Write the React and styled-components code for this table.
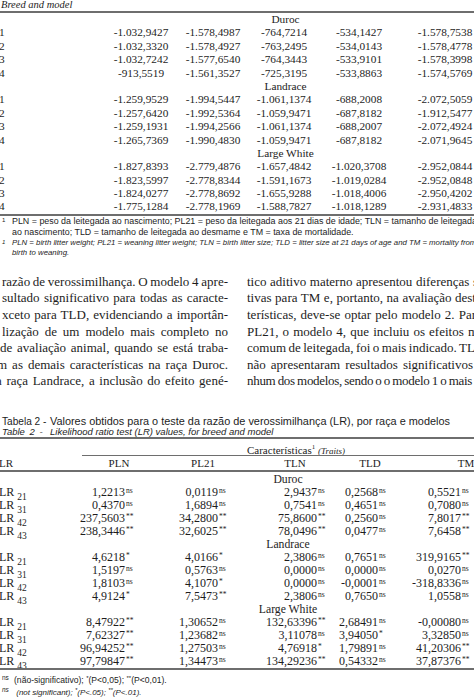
import React from "react";
import styled, { createGlobalStyle } from "styled-components";

const GlobalStyle = createGlobalStyle`
  html, body {
    margin: 0;
    padding: 0;
    background: #fff;
  }
  body {
    width: 474px;
    height: 698px;
    overflow: hidden;
    color: #1d1d1d;
    font-family: "Liberation Serif", "Times New Roman", serif;
  }
`;

const Page = styled.div`
  width: 474px;
  height: 698px;
  overflow: hidden;
  display: flex;
  flex-direction: column;
`;

const Rule = styled.div`
  flex: none;
  height: ${(p) => p.$h || 2}px;
  margin-left: ${(p) => p.$left || 0}px;
  background: #6e6e6e;
`;

/* ---------- table 1 (log likelihood) ---------- */

const BreedLabel = styled.div`
  font-style: italic;
  font-size: 10.5px;
  line-height: 11px;
  height: 12px;
  margin-top: -1px;
  padding-left: 1px;
`;

const Table1 = styled.div`
  display: grid;
  grid-template-columns: 105px 72px 72px 70px 80px 92px;
  grid-auto-rows: 13.4px;
  width: 491px;
  font-size: 11.3px;
  line-height: 13.4px;
`;

const T1Breed = styled.div`
  grid-column: 1 / -1;
  text-align: center;
  padding-left: 80px;
`;

const T1Label = styled.div`
  text-indent: -1px;
`;

const T1Cell = styled.div`
  text-align: center;
  white-space: nowrap;
`;

/* ---------- footnotes ---------- */

const Notes = styled.div`
  font-family: "Liberation Sans", Arial, sans-serif;
  white-space: nowrap;
`;

const Note = styled.div`
  display: flex;
`;

const Mark = styled.span`
  flex: none;
  width: 10px;
  padding-left: 2px;
  font-size: 6px;
  line-height: 8px;
  font-style: ${(p) => (p.$italic ? "italic" : "normal")};
`;

const NoteLines = styled.div`
  font-size: ${(p) => (p.$italic ? 7.8 : 8.9)}px;
  line-height: ${(p) => (p.$italic ? 10.5 : 11)}px;
  font-style: ${(p) => (p.$italic ? "italic" : "normal")};
`;

/* ---------- body text ---------- */

const Columns = styled.div`
  display: grid;
  grid-template-columns: 228px 240px;
  column-gap: 19px;
  margin-top: 15px;
  font-size: 13px;
  line-height: 16.6px;
`;

const Column = styled.div`
  display: flex;
  flex-direction: column;
`;

const TextLine = styled.div`
  width: ${(p) => p.$w || 228}px;
  margin-left: ${(p) => p.$left || 0}px;
  text-align: justify;
  text-align-last: justify;
  text-indent: ${(p) => p.$indent || 0}px;
  word-spacing: ${(p) => p.$ws || 0}px;
  letter-spacing: ${(p) => p.$ls || 0}px;
`;

/* ---------- table 2 (LR) ---------- */

const Caption = styled.div`
  display: grid;
  grid-template-columns: 48px auto;
  margin-top: 26px;
  padding-left: 2px;
  font-family: "Liberation Sans", Arial, sans-serif;
  white-space: nowrap;
`;

const CapText = styled.div`
  font-size: ${(p) => (p.$italic ? 9.5 : p.$label ? 10.1 : 10.9)}px;
  line-height: ${(p) => (p.$italic ? 10 : 11)}px;
  font-style: ${(p) => (p.$italic ? "italic" : "normal")};
  word-spacing: ${(p) => p.$ws || 0}px;
`;

const T2Head = styled.div`
  display: grid;
  grid-template-columns: 82px 74px 94px 90px 60px 132px;
  font-size: 11px;
`;

const Traits = styled.div`
  grid-column: 2 / -1;
  height: 16px;
  line-height: 17px;
  text-align: center;
  padding-right: 22px;
  white-space: nowrap;

  sup {
    font-size: 7px;
  }
  i {
    font-size: 9px;
  }
`;

const HeadCell = styled.div`
  height: 14px;
  line-height: 14px;
  text-align: ${(p) => (p.$left ? "left" : "center")};
  text-indent: ${(p) => (p.$left ? -1 : 0)}px;
`;

const Table2 = styled.div`
  display: grid;
  grid-template-columns: 82px 56px 93px 99px 61px 83px;
  grid-auto-rows: 13px;
  padding-top: 1px;
  font-size: 12px;
  line-height: 13px;
`;

const T2Breed = styled.div`
  grid-column: 2 / -1;
  text-align: center;
  padding-left: 20px;
  font-size: 11.7px;
`;

const LrLabel = styled.div`
  text-indent: -1px;
  white-space: nowrap;

  sub {
    font-size: 9.5px;
    vertical-align: -4px;
    margin-left: 3px;
  }
`;

const Val = styled.div`
  display: flex;
  justify-content: flex-end;
  align-items: flex-start;
  white-space: nowrap;
`;

const Sig = styled.span`
  flex: none;
  width: 12px;
  padding-left: 1px;
  font-size: 7.5px;
  line-height: 9px;
`;

const NsMark = styled.span`
  display: inline-block;
  width: 12px;
  padding-left: 2px;
  font-size: 6.5px;
  vertical-align: 3px;
`;

const Star = styled.span`
  font-size: 6px;
  vertical-align: 3px;
`;

const T2Notes = styled.div`
  margin-top: 3px;
  font-family: "Liberation Sans", Arial, sans-serif;
  white-space: nowrap;
`;

const T2Note = styled.div`
  font-size: ${(p) => (p.$italic ? 8 : 8.6)}px;
  line-height: 10px;
  font-style: ${(p) => (p.$italic ? "italic" : "normal")};
`;

const table1 = [
  {
    breed: "Duroc",
    rows: [
      ["-1.032,9427", "-1.578,4987", "-764,7214", "-534,1427", "-1.578,7538"],
      ["-1.032,3320", "-1.578,4927", "-763,2495", "-534,0143", "-1.578,4778"],
      ["-1.032,7242", "-1.577,6540", "-764,3443", "-533,9101", "-1.578,3998"],
      ["-913,5519", "-1.561,3527", "-725,3195", "-533,8863", "-1.574,5769"],
    ],
  },
  {
    breed: "Landrace",
    rows: [
      ["-1.259,9529", "-1.994,5447", "-1.061,1374", "-688,2008", "-2.072,5059"],
      ["-1.257,6420", "-1.992,5364", "-1.059,9471", "-687,8182", "-1.912,5477"],
      ["-1.259,1931", "-1.994,2566", "-1.061,1374", "-688,2007", "-2.072,4924"],
      ["-1.265,7369", "-1.990,4830", "-1.059,9471", "-687,8182", "-2.071,9645"],
    ],
  },
  {
    breed: "Large White",
    rows: [
      ["-1.827,8393", "-2.779,4876", "-1.657,4842", "-1.020,3708", "-2.952,0844"],
      ["-1.823,5997", "-2.778,8344", "-1.591,1673", "-1.019,0284", "-2.952,0848"],
      ["-1.824,0277", "-2.778,8692", "-1.655,9288", "-1.018,4006", "-2.950,4202"],
      ["-1.775,1284", "-2.778,1969", "-1.588,7827", "-1.018,1289", "-2.931,4833"],
    ],
  },
];

const lrLabels = ["21", "31", "42", "43"];

const table2 = [
  {
    breed: "Duroc",
    rows: [
      ["1,2213 ns", "0,0119 ns", "2,9437 ns", "0,2568 ns", "0,5521 ns"],
      ["0,4370 ns", "1,6894 ns", "0,7541 ns", "0,4651 ns", "0,7080 ns"],
      ["237,5603 **", "34,2800 **", "75,8600 **", "0,2560 ns", "7,8017 **"],
      ["238,3446 **", "32,6025 **", "78,0496 **", "0,0477 ns", "7,6458 **"],
    ],
  },
  {
    breed: "Landrace",
    rows: [
      ["4,6218 *", "4,0166 *", "2,3806 ns", "0,7651 ns", "319,9165 **"],
      ["1,5197 ns", "0,5763 ns", "0,0000 ns", "0,0000 ns", "0,0270 ns"],
      ["1,8103 ns", "4,1070 *", "0,0000 ns", "-0,0001 ns", "-318,8336 ns"],
      ["4,9124 *", "7,5473 **", "2,3806 ns", "0,7650 ns", "1,0558 ns"],
    ],
  },
  {
    breed: "Large White",
    rows: [
      ["8,47922 **", "1,30652 ns", "132,63396 **", "2,68491 ns", "-0,00080 ns"],
      ["7,62327 **", "1,23682 ns", "3,11078 ns", "3,94050 *", "3,32850 ns"],
      ["96,94252 **", "1,27503 ns", "4,76918 *", "1,79891 ns", "41,20306 **"],
      ["97,79847 **", "1,34473 ns", "134,29236 **", "0,54332 ns", "37,87376 **"],
    ],
  },
];

const leftLines = [
  { text: "razão de verossimilhança. O modelo 4 apre-", left: 2, w: 226, ws: -0.6 },
  { text: "sultado significativo para todas as caracte-", left: 2, w: 226 },
  { text: "xceto para TLD, evidenciando a importân-", left: 2, w: 226 },
  { text: "lização de um modelo mais completo no", left: 2, w: 226 },
  { text: "de avaliação animal, quando se está traba-" },
  { text: "m as demais características na raça Duroc.", indent: -3 },
  { text: "a raça Landrace, a inclusão do efeito gené-", indent: -4 },
];

const rightLines = [
  { text: "tico aditivo materno apresentou diferenças s", w: 231 },
  { text: "tivas para TM e, portanto, na avaliação dest", w: 229 },
  { text: "terísticas, deve-se optar pelo modelo 2. Par", w: 229 },
  { text: "PL21, o modelo 4, que incluiu os efeitos m", w: 231 },
  { text: "comum de leitegada, foi o mais indicado. TL", w: 228, ws: -1 },
  { text: "não apresentaram resultados significativos", w: 226 },
  { text: "nhum dos modelos, sendo o o modelo 1 o mais", w: 225, ws: -1, ls: -0.3 },
];

function Value({ raw }) {
  const [num, sig] = raw.split(" ");
  return (
    <Val>
      <span>{num}</span>
      <Sig>{sig}</Sig>
    </Val>
  );
}

export default function App() {
  return (
    <>
      <GlobalStyle />
      <Page>
        <BreedLabel>Breed and model</BreedLabel>
        <Rule />
        <Table1>
          {table1.map((group) => (
            <React.Fragment key={group.breed}>
              <T1Breed>{group.breed}</T1Breed>
              {group.rows.map((row, i) => (
                <React.Fragment key={i}>
                  <T1Label>{i + 1}</T1Label>
                  {row.map((v, j) => (
                    <T1Cell key={j}>{v}</T1Cell>
                  ))}
                </React.Fragment>
              ))}
            </React.Fragment>
          ))}
        </Table1>
        <Rule />

        <Notes>
          <Note>
            <Mark>1</Mark>
            <NoteLines>
              <div>
                PLN = peso da leitegada ao nascimento; PL21 = peso da leitegada aos 21 dias de idade; TLN = tamanho de leitegada
                ao
              </div>
              <div>ao nascimento; TLD = tamanho de leitegada ao desmame e TM = taxa de mortalidade.</div>
            </NoteLines>
          </Note>
          <Note>
            <Mark $italic>1</Mark>
            <NoteLines $italic>
              <div>
                PLN = birth litter weight; PL21 = weaning litter weight; TLN = birth litter size; TLD = litter size at 21 days of
                age and TM = mortality from
              </div>
              <div>birth to weaning.</div>
            </NoteLines>
          </Note>
        </Notes>

        <Columns>
          <Column>
            {leftLines.map((l, i) => (
              <TextLine key={i} $w={l.w} $left={l.left} $ws={l.ws} $indent={l.indent}>
                {l.text}
              </TextLine>
            ))}
          </Column>
          <Column>
            {rightLines.map((l, i) => (
              <TextLine key={i} $w={l.w} $ws={l.ws} $ls={l.ls}>
                {l.text}
              </TextLine>
            ))}
          </Column>
        </Columns>

        <Caption>
          <CapText $label>Tabela 2 -</CapText>
          <CapText>Valores obtidos para o teste da razão de verossimilhança (LR), por raça e modelos</CapText>
          <CapText $italic $ws={2}>
            Table 2 -
          </CapText>
          <CapText $italic>Likelihood ratio test (LR) values, for breed and model</CapText>
        </Caption>
        <Rule />
        <T2Head>
          <Traits>
            Características<sup>1</sup> <i>(Traits)</i>
          </Traits>
        </T2Head>
        <Rule $h={1} $left={82} />
        <T2Head>
          <HeadCell $left>LR</HeadCell>
          <HeadCell>PLN</HeadCell>
          <HeadCell>PL21</HeadCell>
          <HeadCell>TLN</HeadCell>
          <HeadCell>TLD</HeadCell>
          <HeadCell>TM</HeadCell>
        </T2Head>
        <Rule />
        <Table2>
          {table2.map((group) => (
            <React.Fragment key={group.breed}>
              <T2Breed>{group.breed}</T2Breed>
              {group.rows.map((row, i) => (
                <React.Fragment key={i}>
                  <LrLabel>
                    LR<sub>{lrLabels[i]}</sub>
                  </LrLabel>
                  {row.map((v, j) => (
                    <Value key={j} raw={v} />
                  ))}
                </React.Fragment>
              ))}
            </React.Fragment>
          ))}
        </Table2>
        <Rule />
        <T2Notes>
          <T2Note>
            <NsMark>ns</NsMark>(não-significativo); <Star>*</Star>(P&lt;0,05); <Star>**</Star>(P&lt;0,01).
          </T2Note>
          <T2Note $italic>
            <NsMark>ns</NsMark> (not significant); <Star>*</Star>(P&lt;.05); <Star>**</Star>(P&lt;.01).
          </T2Note>
        </T2Notes>
      </Page>
    </>
  );
}
